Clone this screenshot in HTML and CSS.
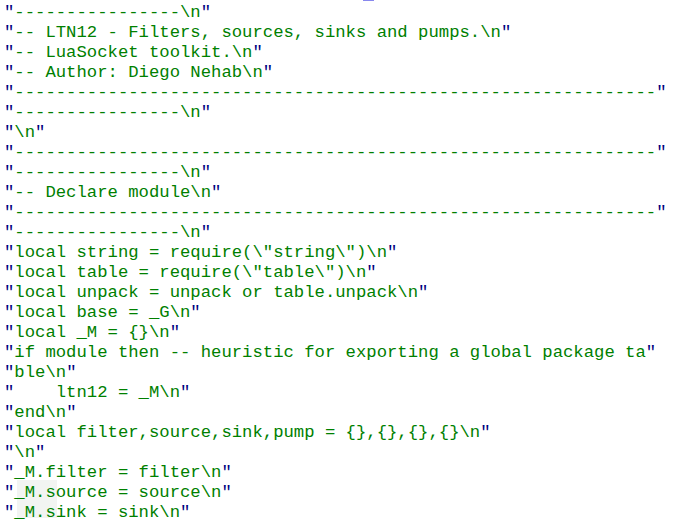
FILE: index.html
```html
<!DOCTYPE html>
<html>
<head>
<meta charset="utf-8">
<link rel="stylesheet" href="styles.css">
</head>
<body>
<div class="page">
<div class="watermark"><span class="wm-box"></span></div>
<span class="cursor-mark"></span>
<pre class="code"><span class="q">"</span>----------------\n<span class="q">"</span>
<span class="q">"</span>-- LTN12 - Filters, sources, sinks and pumps.\n<span class="q">"</span>
<span class="q">"</span>-- LuaSocket toolkit.\n<span class="q">"</span>
<span class="q">"</span>-- Author: Diego Nehab\n<span class="q">"</span>
<span class="q">"</span>--------------------------------------------------------------<span class="q">"</span>
<span class="q">"</span>----------------\n<span class="q">"</span>
<span class="q">"</span>\n<span class="q">"</span>
<span class="q">"</span>--------------------------------------------------------------<span class="q">"</span>
<span class="q">"</span>----------------\n<span class="q">"</span>
<span class="q">"</span>-- Declare module\n<span class="q">"</span>
<span class="q">"</span>--------------------------------------------------------------<span class="q">"</span>
<span class="q">"</span>----------------\n<span class="q">"</span>
<span class="q">"</span>local string = require(\"string\")\n<span class="q">"</span>
<span class="q">"</span>local table = require(\"table\")\n<span class="q">"</span>
<span class="q">"</span>local unpack = unpack or table.unpack\n<span class="q">"</span>
<span class="q">"</span>local base = _G\n<span class="q">"</span>
<span class="q">"</span>local _M = {}\n<span class="q">"</span>
<span class="q">"</span>if module then -- heuristic for exporting a global package ta<span class="q">"</span>
<span class="q">"</span>ble\n<span class="q">"</span>
<span class="q">"</span>    ltn12 = _M\n<span class="q">"</span>
<span class="q">"</span>end\n<span class="q">"</span>
<span class="q">"</span>local filter,source,sink,pump = {},{},{},{}\n<span class="q">"</span>
<span class="q">"</span>\n<span class="q">"</span>
<span class="q">"</span>_M.filter = filter\n<span class="q">"</span>
<span class="q">"</span>_M.source = source\n<span class="q">"</span>
<span class="q">"</span>_M.sink = sink\n<span class="q">"</span></pre>
</div>
</body>
</html>
```
FILE: styles.css
```css
html, body {
  margin: 0;
  padding: 0;
  background: #ffffff;
}
.page {
  position: relative;
  width: 690px;
  height: 526px;
  overflow: hidden;
}
.code {
  position: relative;
  margin: 0;
  padding: 3px 0 0 4px;
  font-family: "Liberation Mono", "Courier New", monospace;
  font-size: 17.25px;
  line-height: 20px;
  color: #008000;
  white-space: pre;
}
.q {
  color: #000080;
}
.watermark {
  position: absolute;
  left: 17px;
  top: 480px;
}
.wm-box {
  display: block;
  width: 40px;
  height: 38px;
  background: #f2f4f2;
}
.cursor-mark {
  position: absolute;
  left: 363px;
  top: 0;
  width: 11px;
  height: 1px;
  background: #8888ee;
}
```
